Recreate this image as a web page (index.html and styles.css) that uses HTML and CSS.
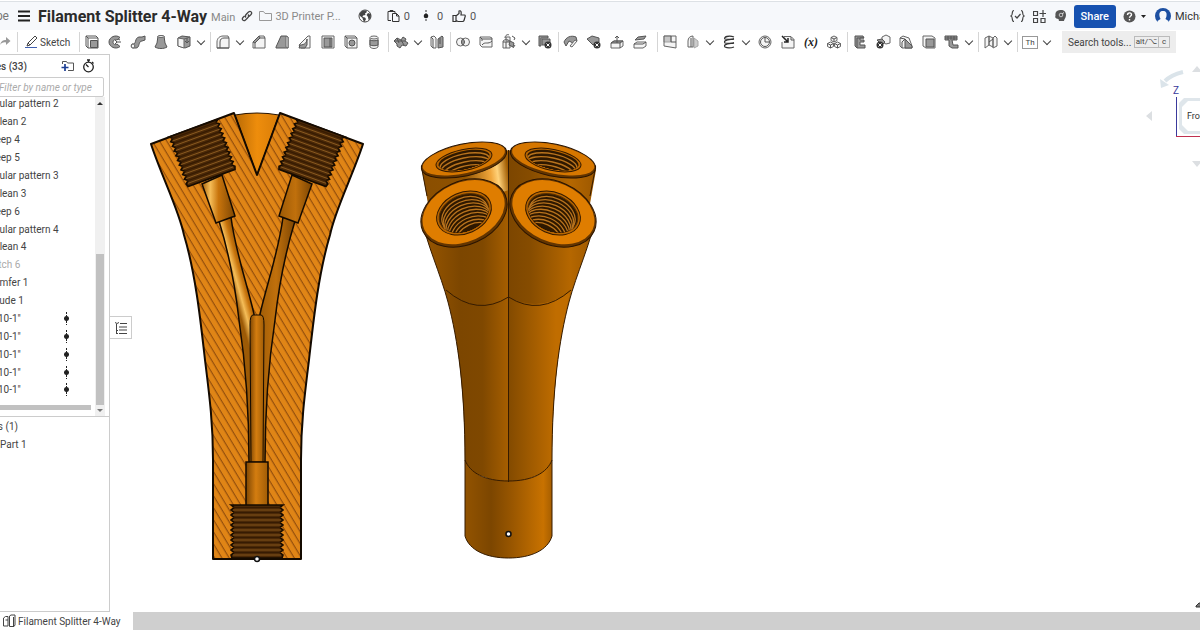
FILE: index.html
```
<!DOCTYPE html>
<html lang="en">
<head>
<meta charset="utf-8">
<title>Filament Splitter 4-Way</title>
<link rel="stylesheet" href="styles.css">
</head>
<body>
<div class="app">
<header class="topbar">
  <a class="brand" href="#">Onshape</a>
  <button class="icon-btn" aria-label="Menu"><svg width="12" height="14" viewBox="0 0 12 14"><path d="M0 2.500h12M0 7h12M0 11.500h12" stroke="#222" stroke-width="2"/></svg></button>
  <h1 class="doc-title">Filament Splitter 4-Way</h1>
  <span class="branch">Main</span>
  <button class="icon-btn link-btn" aria-label="Link"><svg width="12" height="12" viewBox="0 0 12 12" fill="none" stroke="#444" stroke-width="1.300"><path d="M5 7.500C3.500 6 4.500 5 5.500 4L7.500 2C9.500 .3 11.700 2.500 10 4.500L8 6.500M7 4.500C8.500 6 7.500 7 6.500 8L4.500 10C2.500 11.700.3 9.500 2 7.500L3.500 6"/></svg></button>
  <a class="folder" href="#"><svg width="13" height="12" viewBox="0 0 13 12" fill="none" stroke="#999"><path d="M.5 1.500h4l1.500 2h6.500v7H.5z"/></svg>3D Printer P...</a>
  <button class="icon-btn globe" aria-label="Public"><svg width="14" height="14" viewBox="0 0 14 14"><circle cx="7" cy="7" r="6" fill="#fff" stroke="#444"/><path d="M1.500 5C3 2 5 1 8 1.500L9 3 7 4.500 7.500 6 5 6.500 4.500 8 7 8.500 8 10 6.500 13 5 11 4.500 9 2 7zM10 4l3 1-.5 4-2 2-.5-3-1.500-2z" fill="#444"/></svg></button>
  <button class="stat copies"><svg width="13" height="12" viewBox="0 0 13 12" fill="none" stroke="#333"><path d="M4 10.500H1v-9h7v2M3 1.500V.5h3v1M5.500 3.500h4l2.500 2.500v5.500H5.500zM9.500 3.500v2.500H12"/></svg>0</button>
  <button class="stat versions"><svg width="6" height="12" viewBox="0 0 6 12"><path d="M3 0v12" stroke="#333" stroke-dasharray="2 1"/><circle cx="3" cy="6" r="2.300" fill="#222"/></svg>0</button>
  <button class="stat likes"><svg width="14" height="13" viewBox="0 0 14 13" fill="none" stroke="#333" stroke-width="1.200"><path d="M1 5.500h3v6H1zM4 6l3-2.500V1c2-1 2.500 1 2 4h3.500c1 0 .8 1.500.5 2l-1 3.500c-.3 1-.8 1-1.500 1H6l-2-1"/></svg>0</button>
  <div class="account">
    <button class="icon-btn" aria-label="Checks"><svg width="15" height="14" viewBox="0 0 15 14" fill="none" stroke="#444" stroke-width="1.200"><path d="M4 1.500C1 1.500 3.500 6 1 7c2.500 1 0 5.500 3 5.500M11 1.500c3 0 .5 4.500 3 5.500-2.500 1 0 5.500-3 5.500M5 7l2 2 3.500-4"/></svg></button>
    <button class="icon-btn" aria-label="Apps"><svg width="13" height="13" viewBox="0 0 13 13" fill="none" stroke="#444"><path d="M.5 1.500h4v4h-4zM.5 8.500h4v4h-4zM8 8.500h4v4H8zM10 0v7M6.500 3.500h7" stroke-width="1.200"/></svg></button>
    <button class="icon-btn" aria-label="Learning"><svg width="13" height="14" viewBox="0 0 13 14"><path d="M6 1c3.500-.5 6 1.500 6 5 0 3-2 4-2 6H5l-.5-2C1 9.500 1 8 1.500 6.500 1 3 3 1.300 6 1z" fill="#555"/><circle cx="7" cy="6" r="1.800" fill="none" stroke="#ddd" stroke-width=".8"/><path d="M8 5l2-1.500" stroke="#ddd"/></svg></button>
    <button class="share">Share</button>
    <button class="help" aria-label="Help"><svg width="24" height="13" viewBox="0 0 24 13"><circle cx="6.500" cy="6.500" r="6" fill="#555"/><path d="M4.500 5c0-3 4-2.500 4-.3C8.500 6 6.500 6 6.500 7.800M6.500 9v1.500" fill="none" stroke="#fff" stroke-width="1.400"/><path d="M18 5h5l-2.500 3z" fill="#222"/></svg></button>
    <button class="icon-btn" aria-label="Profile"><svg width="16" height="16" viewBox="0 0 16 16"><circle cx="8" cy="8" r="8" fill="#1d50a2"/><path d="M8 3c3 0 4 2 3.500 5-.3 2-1 2.500-1 3 1 1 2 1 3 2v3h-11v-3c1-1 2-1 3-2 0-.5-.7-1-1-3C4 5 5 3 8 3z" fill="#f7f9fb"/></svg></button>
    <span class="user">Michael</span>
  </div>
</header>

<nav class="toolbar" aria-label="Tools">
  <button class="redo" aria-label="Redo"><svg width="11" height="12" viewBox="0 0 11 12"><path d="M0 9C1 5 3 4 6 4V1l4.500 4L6 9V6.500C3 6 1.500 7 0 9z" fill="#999"/></svg></button>
  <div class="group sketch-group"><button class="sketch"><svg width="14" height="14" viewBox="0 0 14 14" fill="none" stroke="#444"><path d="M2 11l1-3 7-7 2 2-7 7zM3 8l2 2"/><path d="M0 12.500h12" stroke="#4060b0"/></svg>Sketch</button></div>

  <div class="group">
    <button class="tool" aria-label="Extrude"><svg viewBox="0 0 18 18"><path class="o" d="M3 3h10l2 2v10H5l-2-2zM3 3l2 2h10M5 5v10"/><path class="g" d="M7.500 7.500h7v7h-7z"/></svg></button>
    <button class="tool" aria-label="Revolve"><svg viewBox="0 0 18 18"><path class="g" d="M14 4.500C10 1 3 4 3 9s7 8 11 4.500l-3-2.500c-2 1.500-4 0-4-2s2-3 4-2z"/><path class="o" d="M9 7l2 2-2 2M11 9h4M12 6l2 1"/></svg></button>
    <button class="tool" aria-label="Sweep"><svg viewBox="0 0 18 18"><path class="g" d="M3 11c5 1 2-6 7-7h3l3-1v4l-3 1c-4 0-2 7-6 7H4c-2 0-2-3-1-4z"/><ellipse class="l" cx="4" cy="13" rx="1.800" ry="2"/></svg></button>
    <button class="tool" aria-label="Loft"><svg viewBox="0 0 18 18"><path class="g" d="M6 3h6l1 7 2 4c-3 2-9 2-12 0l2-4z"/><ellipse class="l" cx="9" cy="3.500" rx="3" ry="1"/></svg></button>
    <button class="tool" aria-label="Thicken"><svg viewBox="0 0 18 18"><path class="g" d="M3 5l4-2 8 1v9l-5 2-7-2z"/><path class="l" d="M3 5l6 1v9l-6-2zM9 6l6-2"/><path class="o" d="M12 5v5l-2-2M12 10l2-2"/></svg></button>
    <button class="chev" aria-label="More"></button>
  </div>
  <div class="group roomy">
    <button class="tool" aria-label="Fillet"><svg viewBox="0 0 18 18"><path class="l" d="M3 15V9c0-4 3-6 6-6h5l1 2v10z"/><path class="o" d="M6 15V9c0-3 2-4 4-4h5M3 15h12"/></svg></button>
    <button class="chev" aria-label="More"></button>
    <button class="tool" aria-label="Chamfer"><svg viewBox="0 0 18 18"><path class="l" d="M3 15V9l6-6h5l1 2v10z"/><path class="g" d="M3 9l6-6 1 2-5 5z"/><path class="o" d="M5 15v-5l5-5h5"/></svg></button>
    <button class="tool" aria-label="Draft"><svg viewBox="0 0 18 18"><path class="g" d="M3 14L8 3h5l2 1v11H3z"/><path class="l" d="M13 3l2 1v11l-2-1z"/></svg></button>
    <button class="tool" aria-label="Rib"><svg viewBox="0 0 18 18"><path class="l" d="M3 12l9-9h2v12H5z"/><path class="g" d="M4 12c5 0 7-3 7-6v6l-2 3H3z"/></svg></button>
    <button class="tool" aria-label="Shell"><svg viewBox="0 0 18 18"><path class="l" d="M3 3h12v12H3z"/><path class="g" d="M5 5h8v9H5z"/><path class="o" d="M11 5v9"/></svg></button>
    <button class="tool" aria-label="Hole"><svg viewBox="0 0 18 18"><path class="l" d="M3 3h10l2 2v10H5l-2-2z"/><path class="o" d="M3 3l2 2h10M5 5v10"/><circle class="g" cx="10" cy="10" r="3"/></svg></button>
    <button class="tool" aria-label="Thread"><svg viewBox="0 0 18 18"><path class="l" d="M5 5v9c2 2 6 2 8 0V5z"/><path class="g" d="M5 7c2 1 6 1 8 0v5c-2 1-6 1-8 0z"/><ellipse class="l" cx="9" cy="4.500" rx="4" ry="1.500"/></svg></button>
  </div>
  <div class="group">
    <button class="tool" aria-label="Pattern"><svg viewBox="0 0 18 18"><path class="g" d="M2 8l3-3 4 2 2-3 3 2-1 2 3 2-2 3-4-1-2 3-3-2v-2z"/><path class="o" d="M5 5l2 5M9 7l3 5M2 8l11 0"/></svg></button>
    <button class="chev" aria-label="More"></button>
    <button class="tool" aria-label="Mirror"><svg viewBox="0 0 18 18"><path class="l" d="M3 4l3-1 2 2v10H5l-2-2z"/><path class="g" d="M10 6l4-3 1 1v10l-5 1z"/><path class="o" d="M3 4l2 2v9M12 5v6"/></svg></button>
  </div>
  <div class="group">
    <button class="tool" aria-label="Boolean"><svg viewBox="0 0 18 18"><circle class="l" cx="6.500" cy="9" r="4"/><circle class="l" cx="11.500" cy="9" r="4"/><path class="g" d="M9 6c2 2 2 4 0 6-2-2-2-4 0-6z"/></svg></button>
    <button class="tool" aria-label="Split"><svg viewBox="0 0 18 18"><path class="l" d="M3 4h10l2 1v9H5l-2-2z"/><path class="o" d="M3 4l2 2h10M5 6v2M5 12c3-4 6 0 10-4"/></svg></button>
    <button class="tool" aria-label="Transform"><svg viewBox="0 0 18 18"><path class="l" d="M3 8l3-2 4 2v7H3zM6 4h4v4H6z"/><path class="g" d="M10 8l4 2-1 4-4-2z"/><path class="o" d="M5 5c0-3 3-4 4-3M12 3l3 2-1 2M15 12l-2 3M6 9v6M3 9h6"/></svg></button>
    <button class="chev" aria-label="More"></button>
    <button class="tool" aria-label="Delete part"><svg viewBox="0 0 18 18"><path class="g" d="M3 3h9v2H5v8H3zM6 6h8v6H6z"/><circle cx="12" cy="12" r="3.500" fill="#333"/><path d="M10.500 10.500l3 3m0-3l-3 3" stroke="#fff"/></svg></button>
  </div>
  <div class="group plain">
    <button class="tool" aria-label="Modify fillet"><svg viewBox="0 0 18 18"><path class="g" d="M2 9c2-5 7-7 12-5l1 4-4 2-4-2-3 5z"/><path class="l" d="M8 13l5-6 2 1-5 6z"/></svg></button>
    <button class="tool" aria-label="Delete face"><svg viewBox="0 0 18 18"><path class="g" d="M2 6l5-3 7 2v4l-6 3z"/><circle cx="12" cy="12" r="3.500" fill="#333"/><path d="M10.500 10.500l3 3m0-3l-3 3" stroke="#fff"/></svg></button>
    <button class="tool" aria-label="Move face"><svg viewBox="0 0 18 18"><path class="l" d="M3 10l3-2h9v5l-3 2H3z"/><path class="g" d="M3 10l3-2h9l-3 2z"/><path class="o" d="M9 10V3M7 5l2-2 2 2M12 10v5"/></svg></button>
    <button class="tool" aria-label="Replace face"><svg viewBox="0 0 18 18"><path class="l" d="M3 11l3-2h9v4l-3 2H3z"/><path class="g" d="M4 7l3-3 8-1-2 3z"/><path class="o" d="M3 11h9l3-2"/></svg></button>
  </div>
  <div class="group">
    <button class="tool" aria-label="Plane"><svg viewBox="0 0 18 18"><path class="l" d="M3 3h12v12l-12-2z"/><path class="g" d="M3 3h7v6H3z" opacity=".5"/><path class="o" d="M10 3v6h5"/></svg></button>
    <button class="tool" aria-label="Surface"><svg viewBox="0 0 18 18"><path class="l" d="M4 14V8c0-3 2-5 5-5v11z"/><path class="g" d="M10 5l4 3v5l-4 2z" opacity=".5"/><path class="o" d="M7 5v9"/></svg></button>
    <button class="chev" aria-label="More"></button>
    <button class="tool" aria-label="Helix"><svg viewBox="0 0 18 18"><path d="M14 4C9 2 3 4 5 6c2 1 7 0 9 0-6 1-11 1-9 4 2 1 7 0 9 0-6 1-11 1-9 4 2 1 6 1 9 0" fill="none" stroke="#333" stroke-width="1.300"/></svg></button>
    <button class="chev" aria-label="More"></button>
    <button class="tool" aria-label="Measure"><svg viewBox="0 0 18 18"><circle class="l" cx="9" cy="9" r="6"/><circle class="o" cx="9" cy="9" r="4.500"/><path class="o" d="M9 5v4h4"/></svg></button>
    <button class="tool" aria-label="Import"><svg viewBox="0 0 18 18"><path class="l" d="M5 3.500h7l3 3V15H3V9"/><path class="o" d="M12 4v3h3"/><path d="M3 3l6 6M9 5v4H5" fill="none" stroke="#222" stroke-width="1.500"/></svg></button>
    <button class="tool variable" aria-label="Variable">(x)</button>
    <button class="tool" aria-label="Composite"><svg viewBox="0 0 18 18"><path class="l" d="M9 3l3 1.500v3L9 9 6 7.500v-3zM5.500 9l3 1.500v3l-3 1.500-3-1.500v-3zM12.500 9l3 1.500v3l-3 1.500-3-1.500v-3z"/><path class="o" d="M6 4.500L9 6l3-1.500M9 6v3M2.500 10.500l3 1.500 3-1.500M5.500 12v3M9.500 10.500l3 1.500 3-1.500M12.500 12v3"/></svg></button>
  </div>
  <div class="group">
    <button class="tool" aria-label="Sheet metal"><svg viewBox="0 0 18 18"><path class="g" d="M4 3h8l1 2H9v2h4v2H9v3h5v3H6l-2-2z"/><path class="o" d="M6 5h7M6 5v10"/></svg></button>
    <button class="tool" aria-label="Finish sheet metal"><svg viewBox="0 0 18 18"><path class="l" d="M8 4l4-2 4 2v6l-4 1-4-2z"/><path class="g" d="M3 7l5-1 3 3-3 3z"/><circle cx="6" cy="12" r="3.500" fill="#333"/><path d="M4.500 10.500l3 3m0-3l-3 3" stroke="#fff"/></svg></button>
    <button class="tool" aria-label="Flange"><svg viewBox="0 0 18 18"><path class="l" d="M3 5l3-2 6 2 3 8v2H5l-2-2z"/><path class="g" d="M8 6l7 7v2H8z"/><path class="o" d="M3 5l5 1M5 15V9l3-3"/></svg></button>
    <button class="tool" aria-label="Tab"><svg viewBox="0 0 18 18"><path class="l" d="M3 3h9l3 2v10H6l-3-2z"/><path class="g" d="M6 6h8v8H6z"/></svg></button>
    <button class="tool" aria-label="Frame"><svg viewBox="0 0 18 18"><path class="g" d="M2 3h12v4H9l1 5h5v3H9l-3-2V7H2z"/><path class="o" d="M2 5h12M5 3v4M8 3v4M11 3v4"/></svg></button>
    <button class="chev" aria-label="More"></button>
  </div>
  <div class="group">
    <button class="tool" aria-label="Simulation"><svg viewBox="0 0 18 18"><path class="l" d="M3 5l4-2v9l-4 3zM7 3l4 2v9l-4-2zM11 5l2-2 2 2v8l-4 2z"/><path class="o" d="M7 9l4-3"/></svg></button>
    <button class="chev" aria-label="More"></button>
  </div>
  <div class="group">
    <button class="tool" aria-label="Custom feature"><span class="th">Th</span></button>
    <button class="chev" aria-label="More"></button>
  </div>
  <button class="search">Search tools... <kbd>alt/⌥</kbd><kbd>c</kbd></button>
</nav>

<main class="workspace">
  <aside class="sidebar">
    <div class="side-head">
      <h2>Features (33)</h2>
      <button class="icon-btn" aria-label="Add folder"><svg width="14" height="12" viewBox="0 0 14 12" fill="none" stroke="#555"><path d="M1.500 4V1.500h4l1 1.500h6v7.500H7"/><path d="M4 4v7M.5 7.500h7" stroke="#1d3f94" stroke-width="1.700"/></svg></button>
      <button class="icon-btn" aria-label="Rollback timer"><svg width="13" height="14" viewBox="0 0 13 14" fill="none" stroke="#222" stroke-width="1.300"><circle cx="6.500" cy="8" r="4.800"/><path d="M5 1h3M6.500 1v2M6.500 8L4 5.500M10 3l1.500 1.500"/></svg></button>
    </div>
    <div class="filter"><input type="text" aria-label="Filter" placeholder="Filter by name or type"></div>
    <div class="tree">
      <ul class="features">
        <li>Circular pattern 2</li><li>Boolean 2</li><li>Sweep 4</li><li>Sweep 5</li><li>Circular pattern 3</li><li>Boolean 3</li><li>Sweep 6</li><li>Circular pattern 4</li><li>Boolean 4</li><li class="muted">Sketch 6</li><li>Chamfer 1</li><li>Extrude 1</li>
        <li class="dim">10-1"<i class="node"></i></li><li class="dim">10-1"<i class="node"></i></li><li class="dim">10-1"<i class="node"></i></li><li class="dim">10-1"<i class="node"></i></li><li class="dim">10-1"<i class="node"></i></li>
      </ul>
      <div class="hscroll"></div>
      <div class="vscroll"><span class="up"></span><div class="thumb"></div><span class="down"></span></div>
    </div>
    <div class="parts">
      <h2>Parts (1)</h2>
      <p>Part 1</p>
    </div>
  </aside>

  <section class="canvas">
    <button class="panel-toggle" aria-label="Toggle list"><svg width="14" height="14" viewBox="0 0 14 14" stroke="#444" fill="none"><path d="M6 2.500h7M5 6h8M5 9h8M5 12.500h8M1 1.500l2 1 2-1M2.500 3v10M2.500 9.500H4M2.500 12.500H4"/></svg></button>
    <svg class="model" width="480" height="470" viewBox="140 100 480 470">
      <defs>
        <pattern id="hatch" width="6.200" height="10" patternUnits="userSpaceOnUse" patternTransform="rotate(-31)"><path d="M2 0v10" stroke="#7d3f08" stroke-width=".9"/></pattern>
        <linearGradient id="boreL"><stop offset="0" stop-color="#a86208"/><stop offset=".25" stop-color="#f5bd58"/><stop offset=".5" stop-color="#c8740c"/><stop offset="1" stop-color="#7d4603"/></linearGradient>
        <linearGradient id="tubeL" gradientUnits="userSpaceOnUse" x1="228" y1="271" x2="246" y2="266"><stop offset="0" stop-color="#9c5a06"/><stop offset=".3" stop-color="#f5bd58"/><stop offset=".6" stop-color="#c8740c"/><stop offset="1" stop-color="#7d4603"/></linearGradient>
        <linearGradient id="boreR"><stop offset="0" stop-color="#9c5a06"/><stop offset=".5" stop-color="#c0700c"/><stop offset="1" stop-color="#7d4603"/></linearGradient>
        <linearGradient id="mid"><stop offset="0" stop-color="#7d4603"/><stop offset=".45" stop-color="#d47d10"/><stop offset="1" stop-color="#a05c06"/></linearGradient>
        <linearGradient id="cone"><stop offset="0" stop-color="#b96a05"/><stop offset=".5" stop-color="#ee8d0c"/><stop offset="1" stop-color="#d97d08"/></linearGradient>
        <linearGradient id="bodyL" gradientUnits="userSpaceOnUse" x1="421" x2="509" y1="0" y2="0"><stop offset="0" stop-color="#9a5700"/><stop offset=".45" stop-color="#7c4600"/><stop offset=".7" stop-color="#7f4800"/><stop offset="1" stop-color="#a75f00"/></linearGradient>
        <linearGradient id="bodyR" gradientUnits="userSpaceOnUse" x1="508" x2="597" y1="0" y2="0"><stop offset="0" stop-color="#7c4600"/><stop offset=".25" stop-color="#864c00"/><stop offset=".7" stop-color="#b56700"/><stop offset="1" stop-color="#9b5700"/></linearGradient>
        <linearGradient id="neckR" gradientUnits="userSpaceOnUse" x1="508" x2="556" y1="0" y2="0"><stop offset="0" stop-color="#824a00"/><stop offset="1" stop-color="#c06d00"/></linearGradient>
        <linearGradient id="foot"><stop offset="0" stop-color="#925300"/><stop offset=".3" stop-color="#7c4600"/><stop offset=".55" stop-color="#9a5700"/><stop offset=".9" stop-color="#c87200"/><stop offset="1" stop-color="#a65e00"/></linearGradient>
        <linearGradient id="shine" gradientUnits="userSpaceOnUse" x1="422" x2="509" y1="190" y2="178"><stop offset="0" stop-color="#8a4e00"/><stop offset=".5" stop-color="#8f5200"/><stop offset=".8" stop-color="#f0a63b"/><stop offset=".88" stop-color="#ffd27a"/><stop offset="1" stop-color="#a05b00"/></linearGradient>
        <g id="thread">
          <path d="M0 0l3 2.500-3 2.500 3 2.500-3 2.500 3 2.500-3 2.500 3 2.500-3 2.500 3 2.500-3 2.500 3 2.500-3 2.500 3 2.500-3 2.500 3 2.500-3 2.500 3 2.500-3 2.500 3 2.500-3 2.500 1 3h50l1-3-3-2.500 3-2.500-3-2.500 3-2.500-3-2.500 3-2.500-3-2.500 3-2.500-3-2.500 3-2.500-3-2.500 3-2.500-3-2.500 3-2.500-3-2.500 3-2.500-3-2.500 3-2.500-3-2.500 3-2.500z" fill="#4a2807" stroke="#160b00" stroke-width="1.600"/>
          <path d="M2 5h48M2 10h48M2 15h48M2 20h48M2 25h48M2 30h48M2 35h48M2 40h48M2 45h48M2 50h48" stroke="#8a5a20" stroke-width=".9"/>
          <path d="M2 2.500h48M2 7.500h48M2 12.500h48M2 17.500h48M2 22.500h48M2 27.500h48M2 32.500h48M2 37.500h48M2 42.500h48M2 47.500h48" stroke="#361b02" stroke-width="1.200"/>
        </g>
        <clipPath id="holeF"><ellipse rx="26" ry="18"/></clipPath>
        <clipPath id="holeB"><ellipse rx="26" ry="9"/></clipPath>
        <g id="frontFace">
          <ellipse rx="45" ry="31.500" fill="#633500" stroke="#2a1400"/>
          <ellipse rx="43" ry="29.500" cy="-1" fill="#df7d00"/>
          <ellipse rx="28.500" ry="20.500" fill="#b96600" stroke="#321900"/>
          <ellipse rx="26" ry="18" fill="#2e1800" stroke="#5a3100"/>
        </g>
        <g id="backFace">
          <ellipse rx="43.500" ry="16" fill="#633500" stroke="#2a1400"/>
          <ellipse rx="42" ry="14.300" cy="-1" fill="#d67700"/>
          <ellipse rx="28.500" ry="10.500" fill="#b96600" stroke="#321900"/>
          <ellipse rx="26" ry="9" fill="#2e1800"/>
          <g clip-path="url(#holeB)" fill="#2e1800" stroke="#b8731d" stroke-width="1.400"><ellipse cy="3" rx="25" ry="9"/><ellipse cy="7" rx="25" ry="9"/><ellipse cy="11" rx="24" ry="9"/><ellipse cy="15" rx="23" ry="9"/></g>
        </g>
        <g id="frontRings" clip-path="url(#holeF)" fill="#2e1800" stroke="#b8731d" stroke-width="1.300"><ellipse cy="2" rx="24" ry="17"/><ellipse cy="5.500" rx="24" ry="17"/><ellipse cy="9" rx="24" ry="17"/><ellipse cy="12.500" rx="24" ry="17"/><ellipse cy="16" rx="24" ry="17"/><ellipse cy="19.500" rx="24" ry="17"/><ellipse cy="23" rx="23" ry="17"/><ellipse cy="26.500" rx="22" ry="17"/><ellipse cy="30" rx="22" ry="17"/></g>
        <path id="cut" d="M151 144L234 113 257 175 280 113 363 144C353 175 335 210 330 235 318 275 313 325 309 360 304 400 301 425 301 460V559H213V460C213 425 210 400 205 360 201 325 196 275 184 235 179 210 161 175 151 144z"/>
      </defs>

      <path d="M235 115Q257 111 279 115L257 175z" fill="url(#cone)" stroke="#2a1400"/>
      <use href="#cut" fill="#e08516"/>
      <use href="#cut" fill="url(#hatch)" stroke="#140a00" stroke-width="2" stroke-linejoin="round"/>
      <g stroke="#140a00" stroke-width="1.500">
        <path d="M219 221L231 217C235 250 246 280 254 314L257 462H249C249 410 245 360 239 320 235 285 228 250 219 221z" fill="url(#tubeL)"/>
        <path d="M295 221L283 217C279 250 268 280 260 314L257 462H265C265 410 269 360 275 320 279 285 286 250 295 221z" fill="url(#boreR)"/>
        <path d="M202 184L222 175 235 216 216 223z" fill="url(#boreL)"/>
        <path d="M312 184L292 175 279 216 298 223z" fill="url(#boreR)"/>
        <path d="M251 462L250 325Q250 315 253 315H261Q264 315 264 325L263 462z" fill="url(#mid)" stroke-width="1"/>
        <path d="M246 462h22v44h-22z" fill="url(#mid)"/>
      </g>
      <use href="#thread" transform="translate(169 137) rotate(-20)"/>
      <use href="#thread" transform="translate(345 137) scale(-1 1) rotate(-20)"/>
      <use href="#thread" transform="translate(231 505)"/>
      <circle cx="257" cy="559" r="2.500" fill="#fff" stroke="#111" stroke-width="1.500"/>

      <path d="M422 170L430 215H509V150z" fill="url(#shine)"/>
      <path d="M596 170L588 215H508V150z" fill="url(#bodyR)"/>
      <path d="M422 218C425 240 441 275 448 302 458 340 465 390 465 470L509 486V190z" fill="url(#bodyL)"/>
      <path d="M595 218C592 240 576 275 569 302 559 340 552 390 552 470L508 486V190z" fill="url(#bodyR)"/>
      <path d="M570 292C559 340 552 390 552 470L508 486V297Q540 313 570 292z" fill="url(#neckR)"/>
      <path d="M465 460Q470 481 508.500 481T552 460V536Q546 558 508.500 558T465 536z" fill="none"/>
      <path d="M465 460C470 473 485 481 508.500 481S547 473 552 460V536C548 550 531 558 508.500 558S469 550 465 536z" fill="url(#foot)" stroke="#351b00"/>
      <path d="M422 170L427 196M595 170L590 196M422 218C425 240 441 275 448 302 458 340 465 390 465 460M595 218C592 240 576 275 569 302 559 340 552 390 552 460M508.500 150V482M446 290Q477 317 508.500 297 540 317 571 290" fill="none" stroke="#351b00"/>
      <use href="#backFace" transform="translate(464 160) rotate(-12)"/>
      <use href="#backFace" transform="translate(553 160) scale(-1 1) rotate(-12)"/>
      <g transform="translate(464 213) rotate(-24)"><use href="#frontFace"/><use href="#frontRings"/></g>
      <g transform="translate(553 213) scale(-1 1) rotate(-24)"><use href="#frontFace"/><use href="#frontRings"/></g>
      <circle cx="508.500" cy="534" r="2.500" fill="#fff" stroke="#111" stroke-width="1.500"/>
    </svg>
    <svg class="view-cube" width="60" height="120" viewBox="1140 54 60 120">
      <path d="M1152 111v10l-6-5zM1192 72h10l-5-6zM1192 161h10l-5 6z" fill="#dcdfe2"/>
      <path d="M1183 72Q1171 75 1165 81" fill="none" stroke="#dbe4ea" stroke-width="4"/><path d="M1160 79l9 6-8 3z" fill="#dbe4ea"/>
      <path d="M1184 98H1210V134H1184L1179 129V103z" fill="#dfe6eb"/><path d="M1188 101H1210V131H1188L1182 125V107z" fill="#fff"/>
      <path d="M1176.500 97v39" stroke="#3a3a9c"/><path d="M1176 136.500h30" stroke="#c03050"/>
      <text x="1173" y="94" class="axis">Z</text><text x="1187" y="119" class="face">Front</text>
    </svg>
    <svg class="scale-icon" width="10" height="12" viewBox="0 0 10 12"><path d="M1 9l3-3h6v4H1zM5 5l3-2h2v2z" fill="#777" stroke="#333"/></svg>
  </section>
</main>

<footer class="tabs">
  <button class="tab"><svg width="13" height="14" viewBox="0 0 13 14" fill="none" stroke="#444"><path d="M.5 4l2-1.500H5V12H.5zM6.500 2l1.500-1h4v10l-1 1.500H6.500zM10.500 3v9M2.500 6H5"/></svg>Filament Splitter 4-Way</button>
  <div class="tab-rest"></div>
</footer>
</div>
</body>
</html>
```
FILE: styles.css
```
* { box-sizing: border-box; }
body { margin: 0; font-family: Roboto, "Liberation Sans", sans-serif; font-size: 10px; color: #444; background: #fff; }
button { font: inherit; color: inherit; background: none; border: 0; padding: 0; margin: 0; display: flex; align-items: center; flex: none; }
h1, h2, p, ul { margin: 0; padding: 0; font-size: 10px; font-weight: 400; list-style: none; }
a { color: inherit; text-decoration: none; }
svg { display: block; flex: none; }
.app { height: 100vh; display: flex; flex-direction: column; overflow: hidden; }

.topbar { flex: none; height: 29px; margin-top: 1px; border-top: 1px solid #dde1e5; background: #f6f8fb; display: flex; align-items: center; white-space: nowrap; }
.brand { width: 9px; margin-right: 9px; display: flex; justify-content: flex-end; flex: none; font-size: 12px; color: #777; }
.doc-title { margin-left: 8px; font-size: 15px; font-weight: 700; color: #2b2b2b; }
.branch { margin-left: 6px; padding-top: 3px; font-size: 11px; color: #888; }
.link-btn { margin-left: 6px; }
.folder { margin-left: 6px; display: flex; align-items: center; gap: 3px; font-size: 11px; color: #8a8a8a; }
.globe { margin-left: 17px; }
.stat { gap: 4px; font-size: 11px; color: #555; }
.copies { margin-left: 15px; }
.versions { margin-left: 13px; gap: 8px; }
.likes { margin-left: 9px; }
.doc-title { font-size: 16px; }
.doc-title + .branch { margin-left: 4px; }
.account { margin-left: auto; display: flex; align-items: center; gap: 8px; }
.share { height: 23px; padding: 0 7px; margin: 0 -1px; border-radius: 3px; background: #1651b0; color: #fff; font-size: 11px; font-weight: 500; }
.user { width: 25px; margin-left: -4px; overflow: hidden; font-size: 11px; color: #333; }

.toolbar { flex: none; height: 24px; display: flex; align-items: center; }
.redo { width: 17px; }
.group { flex: none; display: flex; align-items: center; gap: 5px; height: 20px; padding: 0 4px 0 3px; border-left: 1px solid #d5d5d5; }
.roomy { padding-right: 5px; }
.plain { padding-right: 8px; }
.sketch-group { width: 62px; padding-left: 7px; }
.sketch { gap: 1px; }
.tool { width: 18px; height: 18px; justify-content: center; }
.tool svg { width: 18px; height: 18px; }
.o { fill: none; stroke: #555; }
.l { fill: #f4f4f4; stroke: #666; }
.g { fill: #999; stroke: #555; }
.chev { width: 10px; height: 10px; margin-left: -2px; justify-content: center; }
.chev::before { content: ""; width: 5px; height: 5px; margin-top: -3px; border: solid #444; border-width: 0 1px 1px 0; transform: rotate(45deg); }
.variable { font: italic bold 12px "Liberation Serif", serif; color: #222; }
.th { padding: 1px 2px; border: 1px solid #999; font-size: 8px; }
.search { height: 22px; margin-left: 6px; padding: 0 6px; background: #ededed; white-space: pre; }
kbd { padding: 0 1px; border: 1px solid #bbb; font: 8px/10px Roboto, sans-serif; }
kbd + kbd { border-left: 0; padding: 0 3px; }

.workspace { flex: 1; min-height: 0; display: flex; }
.sidebar { width: 110px; flex: none; border-right: 1px solid #ccc; border-bottom: 1px solid #ccc; border-top: 1px solid #ccc; overflow: hidden; }
.side-head { height: 22px; display: flex; align-items: center; gap: 7px; padding-right: 14px; }
.side-head h2 { width: 27px; margin-right: auto; display: flex; justify-content: flex-end; white-space: nowrap; font-weight: 500; }
.filter { padding-right: 5px; }
.filter input { display: block; width: 115px; height: 20px; margin-left: -11px; padding: 0 0 0 9px; border: 1px solid #ccc; border-radius: 2px; font: italic 10px Roboto, sans-serif; }
.filter input::placeholder { color: #aaa; opacity: 1; }
.tree { height: 320px; display: grid; grid-template: 306px 14px / 1fr 10px; padding-right: 4px; border-bottom: 1px solid #ccc; overflow: hidden; }
.features { height: 304px; margin: -2px 0 0 -18px; display: flex; flex-direction: column; }
.features li { flex: 1; display: flex; align-items: center; white-space: nowrap; }
.features .muted { color: #aaa; }
.features .dim { padding-left: 16px; justify-content: space-between; padding-right: 26px; }
.node { width: 5px; height: 13px; background: radial-gradient(circle at center, #222 2px, transparent 3px), repeating-linear-gradient(#222 0 2px, transparent 2px 3px) center / 1px 100% no-repeat; }
.hscroll { grid-row: 2; height: 5px; margin: 2px 4px 0 0; background: #c1c1c1; }
.vscroll { grid-column: 2; grid-row: 1 / 3; background: #f0f0f0; display: flex; flex-direction: column; align-items: center; }
.up, .down { border: 3px solid transparent; flex: none; }
.up { border-bottom-color: #333; border-top: 0; margin-top: 5px; }
.down { border-top-color: #777; border-bottom: 0; margin: 4px 0 5px; }
.thumb { width: 8px; height: 151px; margin-top: auto; background: #c1c1c1; }
.parts { padding-top: 1px; }
.parts h2 { width: 18px; line-height: 18px; display: flex; justify-content: flex-end; white-space: nowrap; }
.parts p { line-height: 18px; }

.canvas { flex: 1; min-width: 0; position: relative; overflow: hidden; padding: 46px 0 0 30px; }
.panel-toggle { position: absolute; left: -1px; top: 262px; width: 23px; height: 23px; justify-content: center; border: 1px solid #ccc; background: #fff; }
.view-cube { position: absolute; right: 0; top: 0; }
.axis { font-size: 10px; fill: #3a3a9c; }
.face { font-size: 9px; fill: #333; }
.scale-icon { position: absolute; right: -5px; bottom: 3px; }

.tabs { flex: none; height: 18px; display: flex; }
.tab { width: 133px; padding-left: 3px; gap: 2px; }
.tab-rest { flex: 1; background: #cfcfcf; }
```
